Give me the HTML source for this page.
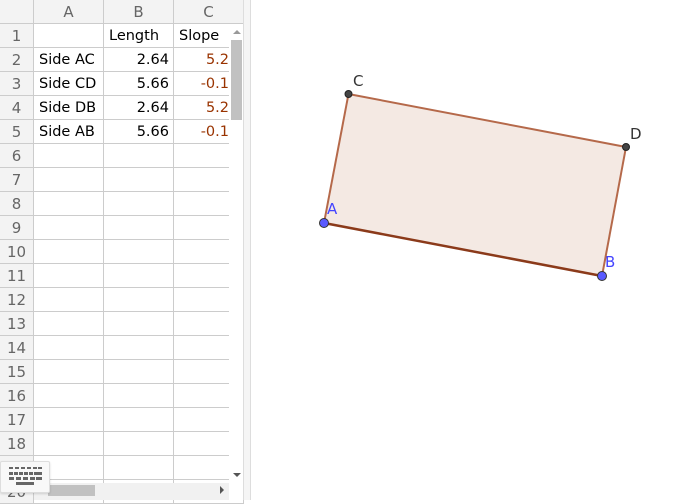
<!DOCTYPE html><html><head><style>
body{margin:0;width:700px;height:500px;overflow:hidden;background:#fff;font-family:"DejaVu Sans","Liberation Sans",sans-serif;position:relative}
.a{position:absolute;box-sizing:border-box}
.h{background:#f3f3f3;color:#666;font-size:15px;text-align:center;border-right:1px solid #ccc;border-bottom:1px solid #ccc}
.c{border-right:1px solid #ccc;border-bottom:1px solid #ccc;font-size:14.5px;color:#000;line-height:25px;padding:0 4px 0 5px;white-space:nowrap;overflow:hidden}
.r{text-align:right}.o{color:#993300}
</style></head><body>
<div class="a h" style="left:0;top:0;width:34px;height:24px"></div>
<div class="a h" style="left:34px;top:0;width:70px;height:24px;line-height:24px">A</div>
<div class="a h" style="left:104px;top:0;width:70px;height:24px;line-height:24px">B</div>
<div class="a h" style="left:174px;top:0;width:70px;height:24px;line-height:24px">C</div>
<div id="g"></div>
<script>
var d=[["","Length","Slope"],["Side AC","2.64","5.2"],["Side CD","5.66","-0.1"],["Side DB","2.64","5.2"],["Side AB","5.66","-0.1"]];
var s="";
for(var i=1;i<=20;i++){var t=24*i;
s+='<div class="a h" style="left:0;top:'+t+'px;width:34px;height:24px;line-height:24px">'+i+'</div>';
var r=d[i-1]||["","",""];
s+='<div class="a c" style="left:34px;top:'+t+'px;width:70px;height:24px">'+r[0]+'</div>';
s+='<div class="a c'+(i>1?' r':'')+'" style="left:104px;top:'+t+'px;width:70px;height:24px">'+r[1]+'</div>';
s+='<div class="a c'+(i>1?' r o':'')+'" style="left:174px;top:'+t+'px;width:70px;height:24px;'+(i>1?'padding-right:14px;':'')+'">'+r[2]+'</div>';}
document.getElementById('g').innerHTML=s;
</script>
<div class="a" style="left:229px;top:24px;width:14px;height:460px;background:#fff"></div>
<div class="a" style="left:231px;top:40px;width:11px;height:80px;background:#c1c1c1"></div>
<div class="a" style="left:233px;top:30px;width:0;height:0;border-left:4px solid transparent;border-right:4px solid transparent;border-bottom:4px solid #999"></div>
<div class="a" style="left:233px;top:473px;width:0;height:0;border-left:4px solid transparent;border-right:4px solid transparent;border-top:4px solid #555"></div>
<div class="a" style="left:34px;top:483px;width:195px;height:17px;background:#f1f1f1"></div>
<div class="a" style="left:48px;top:485px;width:47px;height:11px;background:#c1c1c1"></div>
<div class="a" style="left:220px;top:486px;width:0;height:0;border-top:4px solid transparent;border-bottom:4px solid transparent;border-left:4px solid #555"></div>
<div class="a" style="left:243px;top:0;width:8px;height:500px;background:#f5f5f5;border-left:1px solid #ddd;border-right:1px solid #ddd"></div>
<div class="a" style="left:0;top:461px;width:50px;height:32px;background:#f8f8f8;border:1px solid #ddd;border-radius:2px;box-shadow:0 1px 2px rgba(0,0,0,.15)">
<svg width="50" height="32" style="position:absolute;left:-1px;top:-1px"><g fill="#666">
<rect x="9" y="6" width="4" height="2"/><rect x="15" y="6" width="4" height="2"/><rect x="21" y="6" width="4" height="2"/><rect x="27" y="6" width="4" height="2"/><rect x="33" y="6" width="4" height="2"/><rect x="38" y="6" width="4" height="2"/>
<rect x="9" y="11" width="4" height="3"/><rect x="14" y="11" width="4" height="3"/><rect x="19" y="11" width="4" height="3"/><rect x="24" y="11" width="4" height="3"/><rect x="29" y="11" width="4" height="3"/><rect x="34" y="11" width="4" height="3"/><rect x="38" y="11" width="4" height="3"/>
<rect x="9" y="16" width="5" height="3"/><rect x="16" y="16" width="5" height="3"/><rect x="23" y="16" width="5" height="3"/><rect x="30" y="16" width="5" height="3"/><rect x="36" y="16" width="6" height="3"/>
<rect x="16" y="21" width="18" height="3"/></g></svg></div>
<svg class="a" style="left:0;top:0" width="700" height="500">
<polygon points="324,223 348.5,94 626,147 602,276" fill="#f4e9e3"/>
<line x1="324" y1="223" x2="348.5" y2="94" stroke="#b5694a" stroke-width="2"/>
<line x1="348.5" y1="94" x2="626" y2="147" stroke="#b5694a" stroke-width="2"/>
<line x1="626" y1="147" x2="602" y2="276" stroke="#b5694a" stroke-width="2"/>
<line x1="324" y1="223" x2="602" y2="276" stroke="#8b3a1a" stroke-width="2.5"/>
<circle cx="348.5" cy="94" r="3.5" fill="#444" stroke="#222"/>
<circle cx="626" cy="147" r="3.5" fill="#444" stroke="#222"/>
<circle cx="324" cy="223" r="4.5" fill="#5a5aff" stroke="#333"/>
<circle cx="602" cy="276" r="4.5" fill="#5a5aff" stroke="#333"/>
<g font-family="DejaVu Sans,sans-serif" font-size="15">
<text x="353" y="86" fill="#333">C</text><text x="630" y="139" fill="#333">D</text>
<text x="327" y="214" fill="#4444ff">A</text><text x="605" y="267" fill="#4444ff">B</text></g>
</svg>
</body></html>
